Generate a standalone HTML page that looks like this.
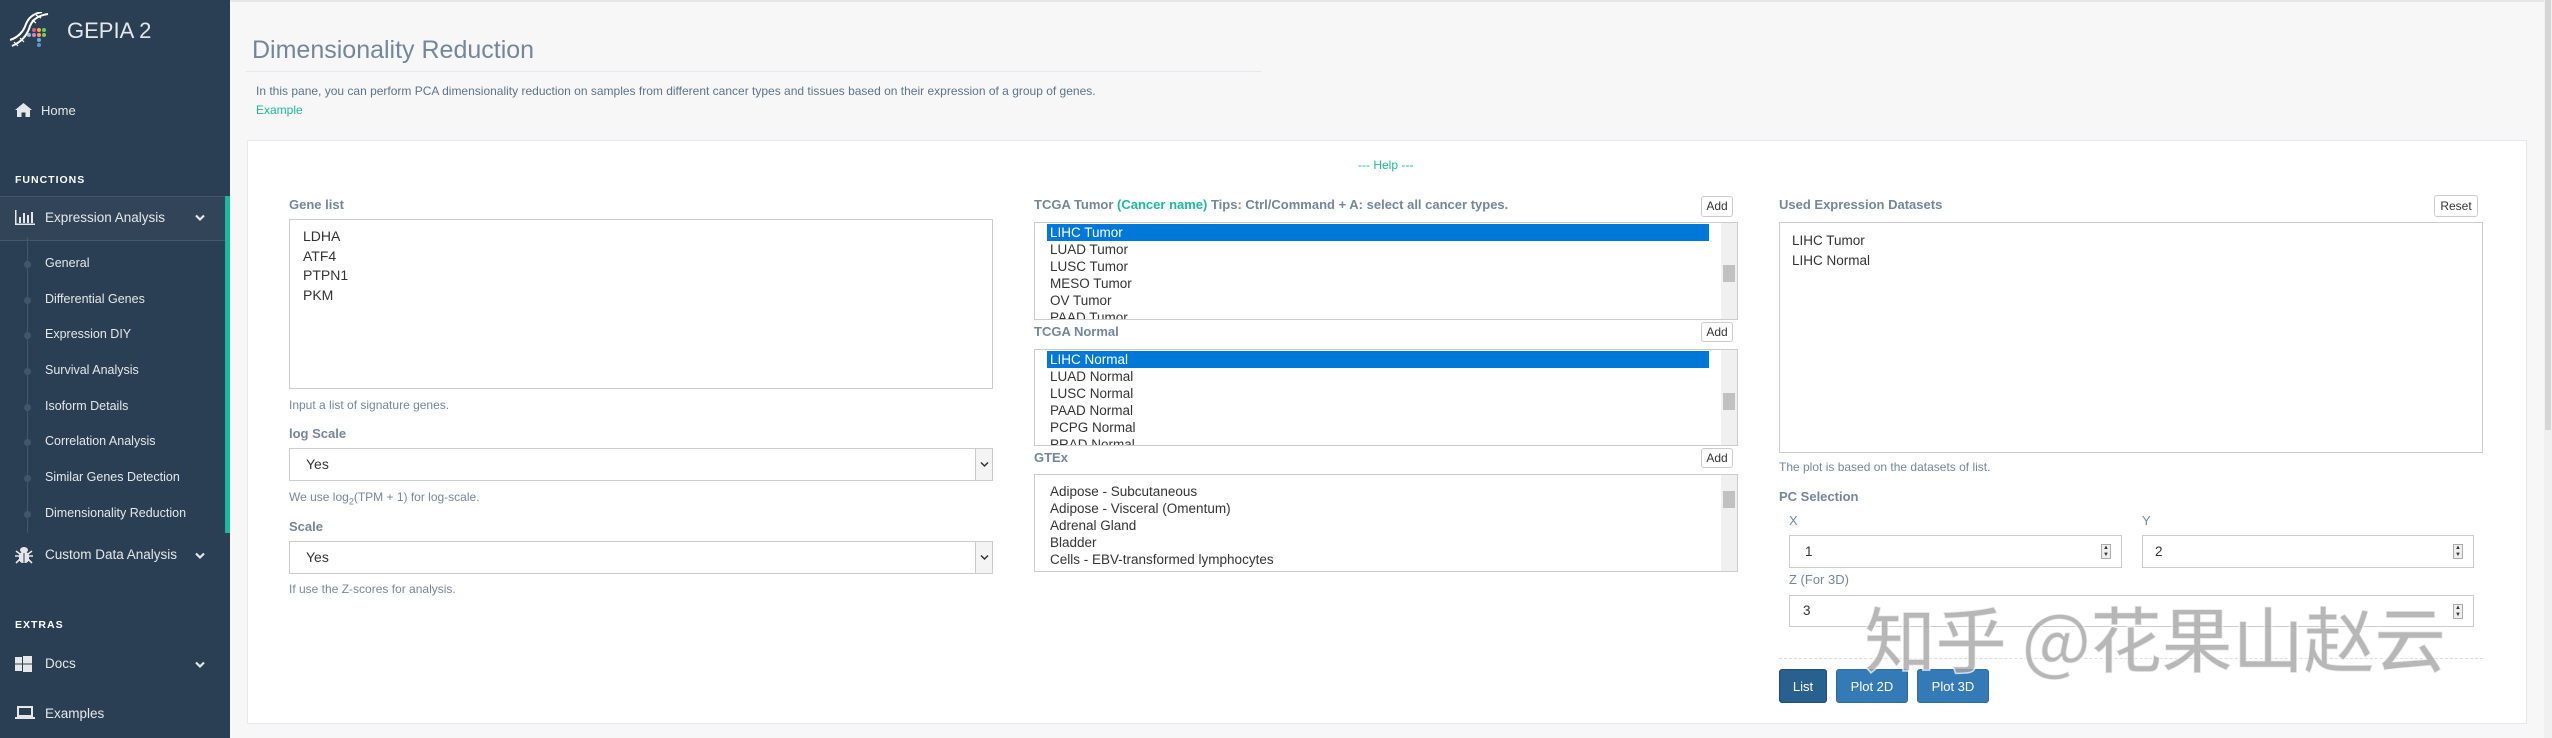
<!DOCTYPE html>
<html><head><meta charset="utf-8"><style>
*{margin:0;padding:0;box-sizing:border-box}
body{width:2552px;height:738px;overflow:hidden;background:#f7f7f7;font-family:"Liberation Sans",sans-serif;position:relative;color:#73879C}
.a{position:absolute;white-space:nowrap}
#sb{position:absolute;left:0;top:0;width:230px;height:738px;background:#2A3F54}
.sb{color:#E7E7E7}
.sub{font-size:12.5px;color:#E7E7E7;left:45px}
.dot{position:absolute;left:24px;width:7px;height:7px;border-radius:50%;background:#425668}
.lbl{font-weight:bold;font-size:13px;color:#73879C}
.box{position:absolute;background:#fff;border:1px solid #ccc}
.help{font-size:12px;color:#73879C}
.btn{position:absolute;background:#fff;border:1px solid #ccc;border-radius:3px;font-size:12px;color:#333;text-align:center}
.row{position:absolute;left:12px;font-size:13.5px;color:#333;height:17px;line-height:17px;padding-left:3px}
.sel{background:#0078D7;color:#fff;width:662px}
.sc{position:absolute;right:0;top:0;width:16px;height:100%;background:#f0f0f0}
.bb{position:absolute;border-radius:3px;color:#fff;font-size:13px;text-align:center;line-height:34px;background:#337ab7;border:1px solid #2e6da4}
.chev{position:absolute;left:195px}
.sa{position:absolute;right:0;top:0;width:17px;height:31px;border-left:1px solid #ccc;background:#f4f4f4}
</style></head><body>
<div id="sb">
<svg class="a" style="left:8px;top:12px" width="44" height="40" viewBox="0 0 44 40">
<path d="M4 34 Q18 28 22 14 Q26 4 40 2" stroke="#fff" stroke-width="2" fill="none"/>
<path d="M2 28 Q14 24 18 12 Q22 2 34 0" stroke="#fff" stroke-width="2" fill="none"/>
<g stroke="#fff" stroke-width="1.2"><line x1="6" y1="30" x2="10" y2="34"/><line x1="12" y1="26" x2="16" y2="30"/><line x1="24" y1="8" x2="28" y2="11"/><line x1="28" y1="3" x2="33" y2="6"/></g>
<circle cx="26" cy="18" r="2" fill="#e57"/><circle cx="31" cy="18" r="2" fill="#fa4"/><circle cx="36" cy="18" r="2" fill="#6c6"/><circle cx="26" cy="23" r="2" fill="#c8c"/><circle cx="31" cy="23" r="2" fill="#f96"/><circle cx="36" cy="23" r="2" fill="#8c4"/><circle cx="31" cy="28" r="2" fill="#6ad"/><circle cx="31" cy="33" r="2" fill="#59c"/><circle cx="21" cy="23" r="2" fill="#9bd"/>
</svg>
<div class="a sb" style="left:67px;top:18px;font-size:22px">GEPIA 2</div>
<svg class="a" style="left:15px;top:103px" width="17" height="14" viewBox="0 0 17 14"><path d="M8.5 0 L17 7 L15 7 L15 14 L10.5 14 L10.5 9.5 L6.5 9.5 L6.5 14 L2 14 L2 7 L0 7 Z" fill="#E7E7E7"/></svg>
<div class="a sb" style="left:41px;top:103px;font-size:13px">Home</div>
<div class="a" style="left:15px;top:174px;font-size:10.5px;font-weight:bold;letter-spacing:1px;color:#fff">FUNCTIONS</div>
<div class="a" style="left:0;top:196px;width:230px;height:45px;background:#324558;border-top:1px solid #425668;border-bottom:1px solid #425668"></div>
<div class="a" style="left:225px;top:196px;width:5px;height:337px;background:#1ABB9C"></div>
<svg class="a" style="left:15px;top:210px" width="20" height="16"><g fill="#E7E7E7"><rect x="0" y="0" width="1.5" height="15"/><rect x="0" y="13.5" width="20" height="1.5"/><rect x="4" y="7" width="2" height="6"/><rect x="8" y="3" width="2" height="10"/><rect x="12" y="5" width="2" height="8"/><rect x="16" y="2" width="2" height="11"/></g></svg>
<div class="a sb" style="left:45px;top:210px;font-size:13.5px">Expression Analysis</div>
<svg class="chev" style="top:214px" width="10" height="8"><path d="M1 1.5 L5 5.5 L9 1.5" stroke="#E7E7E7" stroke-width="2.2" fill="none"/></svg>
<div class="a" style="left:27px;top:237px;width:1px;height:296px;background:#425668"></div>
<div class="dot" style="top:261px"></div><div class="a sub" style="top:256px">General</div>
<div class="dot" style="top:297px"></div><div class="a sub" style="top:292px">Differential Genes</div>
<div class="dot" style="top:332px"></div><div class="a sub" style="top:327px">Expression DIY</div>
<div class="dot" style="top:368px"></div><div class="a sub" style="top:363px">Survival Analysis</div>
<div class="dot" style="top:404px"></div><div class="a sub" style="top:399px">Isoform Details</div>
<div class="dot" style="top:439px"></div><div class="a sub" style="top:434px">Correlation Analysis</div>
<div class="dot" style="top:475px"></div><div class="a sub" style="top:470px">Similar Genes Detection</div>
<div class="dot" style="top:511px"></div><div class="a sub" style="top:506px">Dimensionality Reduction</div>
<svg class="a" style="left:15px;top:546px" width="18" height="18" viewBox="0 0 18 18"><g fill="#E7E7E7"><ellipse cx="9" cy="4" rx="4" ry="3"/><rect x="4" y="6" width="10" height="11" rx="4"/></g><g stroke="#E7E7E7" stroke-width="1.6"><line x1="0" y1="10" x2="18" y2="10"/><line x1="1" y1="5" x2="5" y2="8"/><line x1="17" y1="5" x2="13" y2="8"/><line x1="1" y1="17" x2="5" y2="13"/><line x1="17" y1="17" x2="13" y2="13"/></g><line x1="9" y1="7" x2="9" y2="17" stroke="#2A3F54" stroke-width="1"/></svg>
<div class="a sb" style="left:45px;top:547px;font-size:13.5px">Custom Data Analysis</div>
<svg class="chev" style="top:552px" width="10" height="8"><path d="M1 1.5 L5 5.5 L9 1.5" stroke="#E7E7E7" stroke-width="2.2" fill="none"/></svg>
<div class="a" style="left:15px;top:619px;font-size:10.5px;font-weight:bold;letter-spacing:1px;color:#fff">EXTRAS</div>
<svg class="a" style="left:15px;top:656px" width="17" height="16"><g fill="#E7E7E7"><rect x="0" y="1" width="7" height="6.5"/><rect x="8" y="0" width="9" height="7.5"/><rect x="0" y="8.5" width="7" height="6.5"/><rect x="8" y="8.5" width="9" height="7.5"/></g></svg>
<div class="a sb" style="left:45px;top:656px;font-size:13.5px">Docs</div>
<svg class="chev" style="top:661px" width="10" height="8"><path d="M1 1.5 L5 5.5 L9 1.5" stroke="#E7E7E7" stroke-width="2.2" fill="none"/></svg>
<svg class="a" style="left:15px;top:706px" width="20" height="14"><rect x="3" y="1" width="14" height="9" fill="none" stroke="#E7E7E7" stroke-width="2"/><rect x="0" y="11" width="20" height="2" fill="#E7E7E7"/></svg>
<div class="a sb" style="left:45px;top:706px;font-size:13.5px">Examples</div>
</div>

<div class="a" style="left:230px;top:0;width:2322px;height:2px;background:#e6e6e6"></div>
<div class="a" style="left:252px;top:36px;font-size:25px;color:#73879C">Dimensionality Reduction</div>
<div class="a" style="left:246px;top:71px;width:1016px;height:1px;background:#e6e9ed"></div>
<div class="a" style="left:256px;top:84px;font-size:12px;color:#5A738E">In this pane, you can perform PCA dimensionality reduction on samples from different cancer types and tissues based on their expression of a group of genes.</div>
<div class="a" style="left:256px;top:103px;font-size:12px;color:#1ABB9C">Example</div>

<div class="a" style="left:247px;top:140px;width:2280px;height:584px;background:#fff;border:1px solid #e6e9ed"></div>
<div class="a" style="left:1358px;top:158px;font-size:12px;color:#1ABB9C">--- Help ---</div>

<div class="a lbl" style="left:289px;top:197px">Gene list</div>
<div class="box" style="left:289px;top:219px;width:704px;height:170px;font-size:14px;color:#333;line-height:19.5px;padding:7px 0 0 13px">LDHA<br>ATF4<br>PTPN1<br>PKM</div>
<div class="a help" style="left:289px;top:398px">Input a list of signature genes.</div>
<div class="a lbl" style="left:289px;top:426px">log Scale</div>
<div class="box" style="left:289px;top:448px;width:704px;height:33px;font-size:14px;color:#333;line-height:31px;padding-left:16px">Yes<div class="sa"><svg style="position:absolute;left:4px;top:12px" width="9" height="7"><path d="M1 1.5 L4.5 5 L8 1.5" stroke="#333" stroke-width="1.5" fill="none"/></svg></div></div>
<div class="a help" style="left:289px;top:490px">We use log<sub style="font-size:9px">2</sub>(TPM + 1) for log-scale.</div>
<div class="a lbl" style="left:289px;top:519px">Scale</div>
<div class="box" style="left:289px;top:541px;width:704px;height:33px;font-size:14px;color:#333;line-height:31px;padding-left:16px">Yes<div class="sa"><svg style="position:absolute;left:4px;top:12px" width="9" height="7"><path d="M1 1.5 L4.5 5 L8 1.5" stroke="#333" stroke-width="1.5" fill="none"/></svg></div></div>
<div class="a help" style="left:289px;top:582px">If use the Z-scores for analysis.</div>

<div class="a lbl" style="left:1034px;top:197px">TCGA Tumor <span style="color:#1ABB9C">(Cancer name)</span> Tips: Ctrl/Command + A: select all cancer types.</div>
<div class="btn" style="left:1701px;top:196px;width:32px;height:21px;line-height:19px">Add</div>
<div class="box" style="left:1034px;top:222px;width:704px;height:98px;overflow:hidden">
<div class="row sel" style="top:1px">LIHC Tumor</div><div class="row" style="top:18px">LUAD Tumor</div><div class="row" style="top:35px">LUSC Tumor</div><div class="row" style="top:52px">MESO Tumor</div><div class="row" style="top:69px">OV Tumor</div><div class="row" style="top:86px">PAAD Tumor</div>
<div class="sc"><div class="a" style="left:2px;top:42px;width:12px;height:17px;background:#c1c1c1"></div></div></div>
<div class="a lbl" style="left:1034px;top:324px">TCGA Normal</div>
<div class="btn" style="left:1701px;top:322px;width:32px;height:20px;line-height:18px">Add</div>
<div class="box" style="left:1034px;top:349px;width:704px;height:97px;overflow:hidden">
<div class="row sel" style="top:1px">LIHC Normal</div><div class="row" style="top:18px">LUAD Normal</div><div class="row" style="top:35px">LUSC Normal</div><div class="row" style="top:52px">PAAD Normal</div><div class="row" style="top:69px">PCPG Normal</div><div class="row" style="top:86px">PRAD Normal</div>
<div class="sc"><div class="a" style="left:2px;top:43px;width:12px;height:17px;background:#c1c1c1"></div></div></div>
<div class="a lbl" style="left:1034px;top:450px">GTEx</div>
<div class="btn" style="left:1701px;top:448px;width:32px;height:20px;line-height:18px">Add</div>
<div class="box" style="left:1034px;top:474px;width:704px;height:98px;overflow:hidden">
<div class="row" style="top:8px">Adipose - Subcutaneous</div><div class="row" style="top:25px">Adipose - Visceral (Omentum)</div><div class="row" style="top:42px">Adrenal Gland</div><div class="row" style="top:59px">Bladder</div><div class="row" style="top:76px">Cells - EBV-transformed lymphocytes</div><div class="row" style="top:93px">Adipose - Ac</div>
<div class="sc"><div class="a" style="left:2px;top:16px;width:12px;height:17px;background:#c1c1c1"></div></div></div>

<div class="a lbl" style="left:1779px;top:197px">Used Expression Datasets</div>
<div class="btn" style="left:2434px;top:195px;width:44px;height:22px;line-height:20px">Reset</div>
<div class="box" style="left:1779px;top:222px;width:704px;height:231px;font-size:13.5px;color:#333;line-height:20px;padding:8px 0 0 12px">LIHC Tumor<br>LIHC Normal</div>
<div class="a help" style="left:1779px;top:460px">The plot is based on the datasets of list.</div>
<div class="a lbl" style="left:1779px;top:489px">PC Selection</div>
<div class="a help" style="left:1789px;top:513px;font-size:13px">X</div>
<div class="a help" style="left:2142px;top:513px;font-size:13px">Y</div>
<div class="box" style="left:1789px;top:535px;width:333px;height:33px;font-size:13.5px;color:#333;line-height:31px;padding-left:15px">1<div class="a" style="right:10px;top:8px;width:10px;height:15px;border:1px solid #aaa;background:#eee;font-size:6px;line-height:7px;text-align:center">&#9650;<br>&#9660;</div></div>
<div class="box" style="left:2142px;top:535px;width:332px;height:33px;font-size:13.5px;color:#333;line-height:31px;padding-left:12px">2<div class="a" style="right:10px;top:8px;width:10px;height:15px;border:1px solid #aaa;background:#eee;font-size:6px;line-height:7px;text-align:center">&#9650;<br>&#9660;</div></div>
<div class="a help" style="left:1789px;top:572px;font-size:13px">Z (For 3D)</div>
<div class="box" style="left:1789px;top:595px;width:685px;height:32px;font-size:13.5px;color:#333;line-height:30px;padding-left:13px">3<div class="a" style="right:10px;top:8px;width:10px;height:15px;border:1px solid #aaa;background:#eee;font-size:6px;line-height:7px;text-align:center">&#9650;<br>&#9660;</div></div>
<div class="a" style="left:1779px;top:658px;width:704px;border-top:1px dashed #ddd"></div>
<div class="bb" style="left:1779px;top:669px;width:48px;height:34px;background:#286090;border-color:#204d74">List</div>
<div class="bb" style="left:1836px;top:669px;width:72px;height:34px">Plot 2D</div>
<div class="bb" style="left:1917px;top:669px;width:72px;height:34px">Plot 3D</div>

<div class="a" style="left:1864px;top:583px;font-size:72px;color:rgba(165,165,165,0.8);font-family:'Noto Sans CJK SC',sans-serif;font-weight:500;-webkit-text-stroke:1.5px rgba(255,255,255,0.7);letter-spacing:-1px">知乎 @花果山赵云</div>

<div class="a" style="left:2544px;top:0;width:8px;height:738px;background:#f0f0f0"></div>
<div class="a" style="left:2545px;top:0;width:6px;height:430px;background:#d6d6d6"></div>
</body></html>
